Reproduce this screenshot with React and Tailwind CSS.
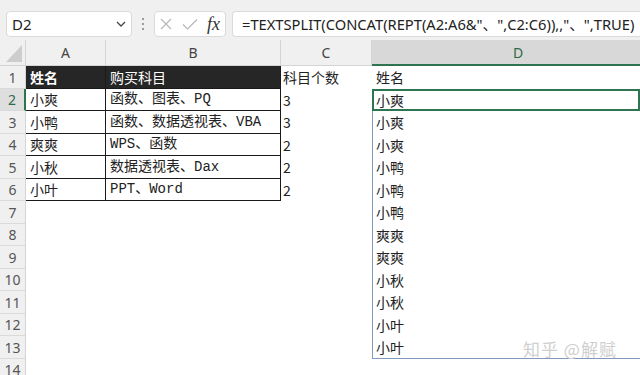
import React from "react";

const SANS = "font-['Noto_Sans','Noto_Sans_CJK_SC',sans-serif]";
const CJK = "font-['Noto_Sans_CJK_SC',sans-serif]";
const MONO = "font-['Liberation_Mono','Noto_Sans_CJK_SC',monospace]";

const heights = [23, 22, 23, 22, 23, 22, 23, 22, 23, 22, 23, 22, 23, 22];
const table = [
  ["姓名", "购买科目", "科目个数"],
  ["小爽", "函数、图表、PQ", "3"],
  ["小鸭", "函数、数据透视表、VBA", "3"],
  ["爽爽", "WPS、函数", "2"],
  ["小秋", "数据透视表、Dax", "2"],
  ["小叶", "PPT、Word", "2"],
];
const dvals = [
  "姓名",
  "小爽", "小爽", "小爽",
  "小鸭", "小鸭", "小鸭",
  "爽爽", "爽爽",
  "小秋", "小秋",
  "小叶", "小叶",
];

function Row({ n, h }) {
  const i = n - 1;
  const t = table[i];
  const isHead = n === 1;
  const inTable = n <= 6;
  const d = dvals[i];
  const sel = n === 2;
  let dCls = "w-[300px] h-full flex items-center text-[14px] text-[#222] " + CJK;
  if (n === 1) dCls += " pl-[4px]";
  else if (n === 2) dCls += " border-2 border-[#2f7450] pl-[2px]";
  else if (n < 13) dCls += " border-l border-[#8198bf] pl-[3px]";
  else if (n === 13) dCls += " border-l border-b border-[#8198bf] pl-[3px]";
  return (
    <div className="flex" style={{ height: h }}>
      <div
        className={
          "w-[26px] shrink-0 h-full flex items-center justify-center text-[14px] border-b border-[#dadada] " +
          SANS +
          (sel
            ? " bg-[#dedede] border-r-2 border-r-[#2f7450] text-[#2f6a48]"
            : " bg-[#f0f0f0] border-r border-r-[#d4d4d4] text-[#555]")
        }
      >
        {n}
      </div>
      <div
        className={
          "w-[80px] shrink-0 h-full flex items-center pl-[4px] text-[14px] " +
          CJK +
          (inTable ? " border-b border-r border-[#1a1a1a]" : "") +
          (isHead ? " bg-[#262626] text-white font-bold" : " text-[#222]")
        }
      >
        {t ? t[0] : ""}
      </div>
      <div
        className={
          "w-[175px] shrink-0 h-full flex items-center pl-[4px] text-[14px] whitespace-nowrap " +
          (isHead ? CJK : MONO) +
          (inTable ? " border-b border-r border-[#1a1a1a]" : "") +
          (isHead ? " bg-[#262626] text-white" : " text-[#222]")
        }
      >
        {t ? t[1] : ""}
      </div>
      <div className={"w-[91px] shrink-0 h-full flex items-center pl-[2px] text-[14px] text-[#222] " + CJK}>
        {t ? t[2] : ""}
      </div>
      <div className={dCls}>{d || ""}</div>
    </div>
  );
}

export default function App() {
  return (
    <div className={"relative w-[640px] h-[375px] overflow-hidden bg-white " + SANS}>
      {/* formula bar */}
      <div className="h-[40px] bg-[#f0f0f0] flex items-start pt-[11px] pl-[6px]">
        <div className="w-[126px] h-[26px] shrink-0 bg-white border border-[#dadada] rounded-[4px] flex items-center justify-between pl-[5px] pr-[5px]">
          <span className="text-[15px] text-[#222]">D2</span>
          <svg width="10" height="6" viewBox="0 0 10 6">
            <path d="M1 1 L5 5 L9 1" fill="none" stroke="#444" strokeWidth="1.3" />
          </svg>
        </div>
        <div className="w-[22px] h-[26px] shrink-0 flex flex-col items-center justify-center gap-[3px]">
          <div className="w-[2px] h-[2px] bg-[#9a9a9a]" />
          <div className="w-[2px] h-[2px] bg-[#9a9a9a]" />
          <div className="w-[2px] h-[2px] bg-[#9a9a9a]" />
        </div>
        <div className="w-[72px] h-[26px] shrink-0 bg-white border border-[#dadada] rounded-[4px] flex items-center pl-[5px]">
          <svg width="12" height="12" viewBox="0 0 12 12">
            <path d="M1 1 L11 11 M11 1 L1 11" stroke="#b5b5b5" strokeWidth="1.1" />
          </svg>
          <svg width="16" height="12" viewBox="0 0 16 12" className="ml-[10px]">
            <path d="M1 6.5 L5.5 11 L15 1.5" fill="none" stroke="#b5b5b5" strokeWidth="1.1" />
          </svg>
          <span className="ml-[9px] font-['Liberation_Serif',serif] italic text-[18px] leading-none text-[#333]">fx</span>
        </div>
        <div className="ml-[6px] flex-1 h-[26px] bg-white border border-[#dadada] border-r-0 rounded-l-[4px] flex items-center pl-[9px] whitespace-nowrap overflow-hidden">
          <span className="text-[14.7px] text-[#222]">=TEXTSPLIT(CONCAT(REPT(A2:A6&amp;"、",C2:C6)),,"、",TRUE)</span>
        </div>
      </div>

      {/* column headers */}
      <div className="flex h-[26px] bg-[#f0f0f0]">
        <div className="w-[26px] shrink-0 h-full flex items-end justify-end pr-[3px] pb-[3px] border-r border-[#d4d4d4] border-b border-b-[#d4d4d4]">
          <svg width="16" height="17" viewBox="0 0 16 17">
            <path d="M16 0 L16 17 L0 17 Z" fill="#cdcdcd" />
          </svg>
        </div>
        <div className="w-[80px] shrink-0 h-full flex items-center justify-center text-[14px] text-[#444] border-r border-[#d4d4d4] border-b border-b-[#d4d4d4]">A</div>
        <div className="w-[175px] shrink-0 h-full flex items-center justify-center text-[14px] text-[#444] border-r border-[#d4d4d4] border-b border-b-[#d4d4d4]">B</div>
        <div className="w-[91px] shrink-0 h-full flex items-center justify-center text-[14px] text-[#444] border-r border-[#d4d4d4] border-b border-b-[#d4d4d4]">C</div>
        <div className="w-[300px] shrink-0 h-full flex items-center pl-[141px] text-[14px] text-[#2f6a48] bg-[#d8d8d8] border-b-2 border-[#2f7450]">D</div>
      </div>

      {/* rows */}
      {heights.map((h, i) => (
        <Row key={i} n={i + 1} h={h} />
      ))}

      {/* watermark */}
      <div className={"absolute left-[523px] top-[336px] text-[17px] text-[#cfcfcf] tracking-[1px] " + CJK}>
        知乎 @解赋
      </div>
    </div>
  );
}
